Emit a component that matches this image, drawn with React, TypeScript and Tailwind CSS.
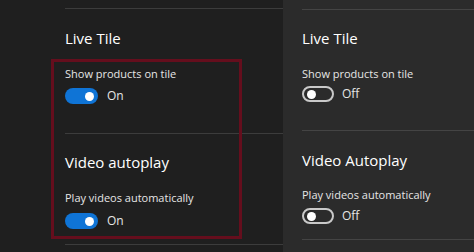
import React from 'react';

const font = { fontFamily: '"Segoe UI", "Open Sans", "Noto Sans", sans-serif' };

const Toggle: React.FC<{ on: boolean }> = ({ on }) =>
  on ? (
    <div className="w-[33px] h-[16px] rounded-full bg-[#0f74d6] flex items-center justify-end pr-[4px]">
      <div className="w-[9px] h-[9px] rounded-full bg-white" />
    </div>
  ) : (
    <div className="w-[32px] h-[16px] rounded-full border-2 border-[#c9c9c9] flex items-center pl-[3px]">
      <div className="w-[9px] h-[9px] rounded-full bg-white" />
    </div>
  );

export default function App() {
  return (
    <div className="w-[474px] h-[252px] flex overflow-hidden" style={font}>
      {/* old settings */}
      <div className="relative w-[283px] h-full bg-[#1f1f1f] pt-[8px]">
        <div className="ml-[65px] h-px bg-[#3c3c3c]" />
        <div className="ml-[65px]">
          <h2 className="mt-[19px] text-[15px] leading-[20px] text-white">Live Tile</h2>
          <p className="mt-[18px] text-[11px] leading-[16px] text-[#e6e6e6]">Show products on tile</p>
          <div className="mt-[6px] flex items-center gap-[9px]">
            <Toggle on />
            <span className="text-[12px] leading-[16px] text-[#e6e6e6]">On</span>
          </div>
        </div>
        <div className="ml-[65px] mt-[29px] h-px bg-[#3c3c3c]" />
        <div className="ml-[65px]">
          <h2 className="mt-[18px] text-[15px] leading-[20px] text-white">Video autoplay</h2>
          <p className="mt-[18px] text-[11px] leading-[16px] text-[#e6e6e6]">Play videos automatically</p>
          <div className="mt-[7px] flex items-center gap-[9px]">
            <Toggle on />
            <span className="text-[12px] leading-[16px] text-[#e6e6e6]">On</span>
          </div>
        </div>
        <div className="ml-[65px] mt-[15px] h-px bg-[#3c3c3c]" />
        <div className="absolute left-[51px] top-[59px] w-[191px] h-[180px] border-[3px] border-[#650e1d]" />
      </div>

      {/* new settings */}
      <div className="flex-1 h-full bg-[#2b2b2b] pt-[9px] pl-[19px]">
        <div className="h-px bg-[#444444]" />
        <h2 className="mt-[18px] text-[15px] leading-[20px] text-white">Live Tile</h2>
        <p className="mt-[18px] text-[11px] leading-[16px] text-[#e6e6e6]">Show products on tile</p>
        <div className="mt-[4px] flex items-center gap-[8px]">
          <Toggle on={false} />
          <span className="text-[12px] leading-[16px] text-[#e6e6e6]">Off</span>
        </div>
        <div className="mt-[28px] h-px bg-[#444444]" />
        <h2 className="mt-[19px] text-[15px] leading-[20px] text-white">Video Autoplay</h2>
        <p className="mt-[17px] text-[11px] leading-[16px] text-[#e6e6e6]">Play videos automatically</p>
        <div className="mt-[5px] flex items-center gap-[8px]">
          <Toggle on={false} />
          <span className="text-[12px] leading-[16px] text-[#e6e6e6]">Off</span>
        </div>
        <div className="mt-[15px] h-px bg-[#444444]" />
      </div>
    </div>
  );
}
